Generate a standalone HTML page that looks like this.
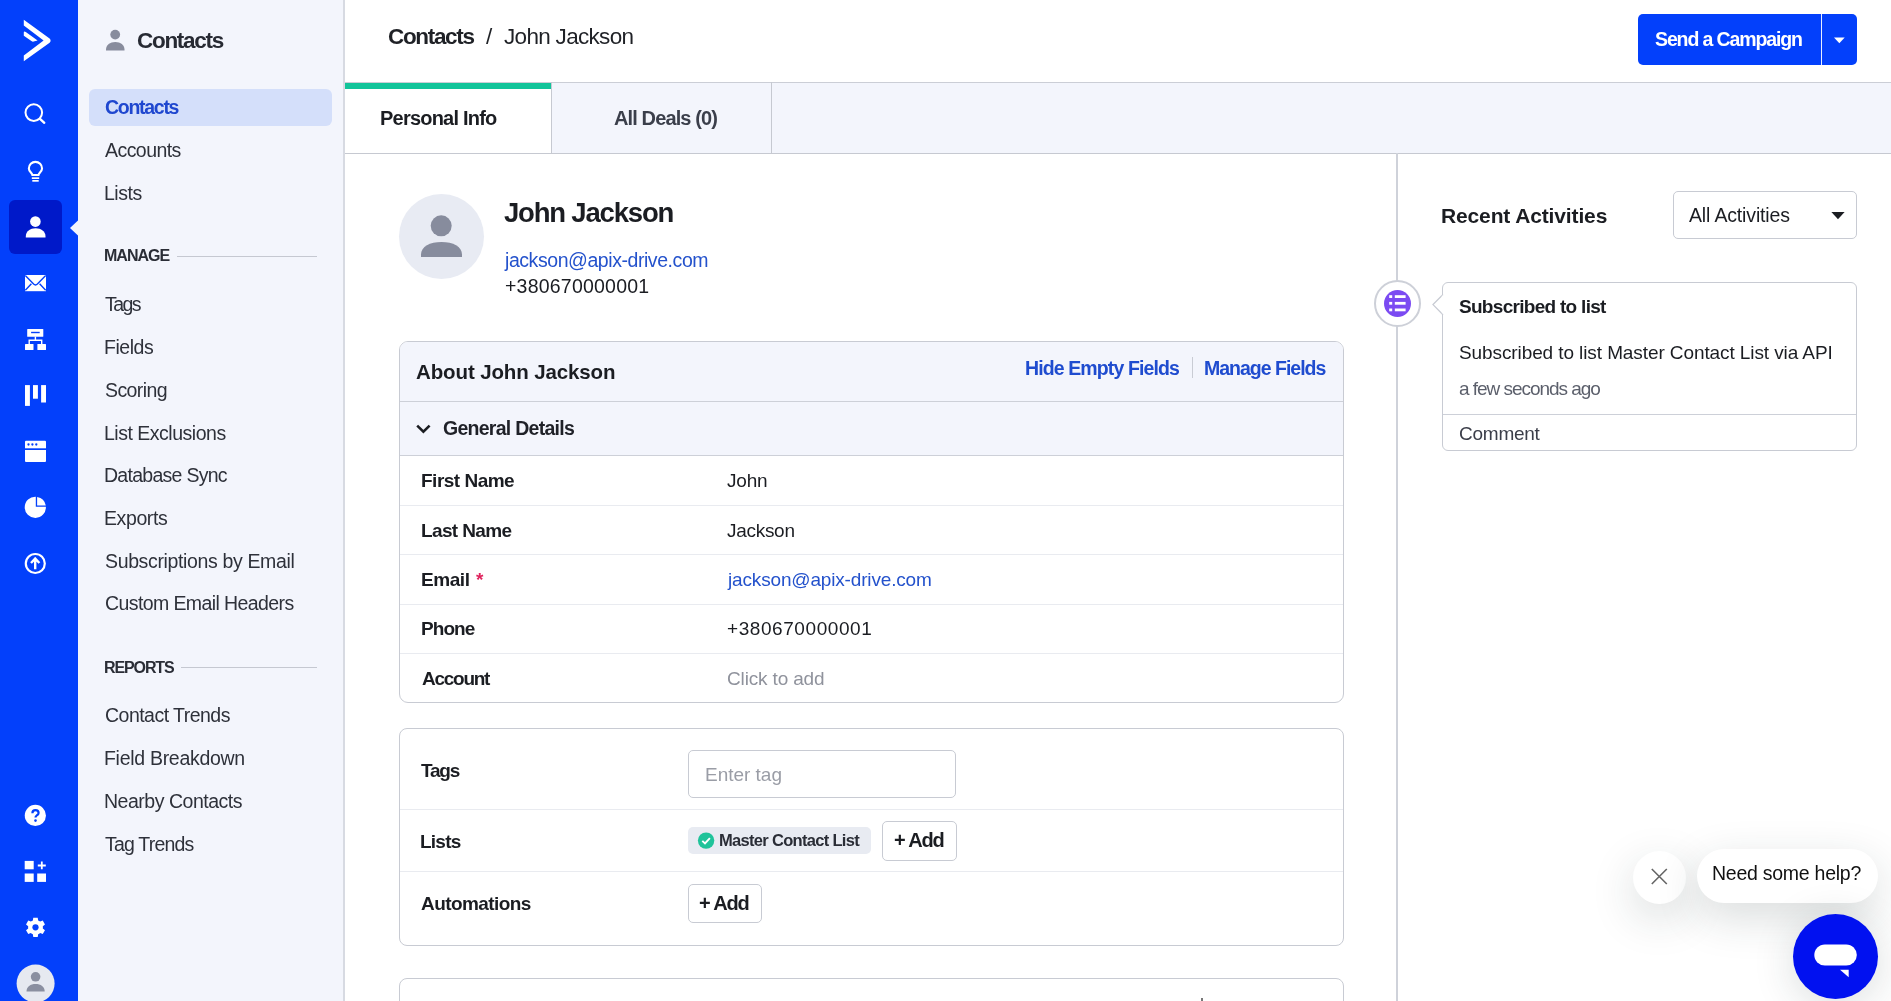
<!DOCTYPE html>
<html><head><meta charset="utf-8">
<style>
*{box-sizing:border-box;margin:0;padding:0}
html,body{width:1891px;height:1001px;overflow:hidden;background:#fff;font-family:"Liberation Sans",sans-serif;color:#1f2129;position:relative}
.a{position:absolute}
.t{position:absolute;white-space:nowrap;line-height:1;will-change:transform}
svg{position:absolute;overflow:visible}

</style></head><body>
<!-- rail -->
<div class="a" style="left:0;top:0;width:78px;height:1001px;background:#0340fb"></div>
<div class="a" style="left:9px;top:200px;width:53px;height:54px;background:#0019c9;border-radius:6px"></div>
<!-- nav -->
<div class="a" style="left:78px;top:0;width:266px;height:1001px;background:#f3f5fc"></div>
<div class="a" style="left:343px;top:0;width:2px;height:1001px;background:#d7dae2"></div>
<div class="a" style="left:89px;top:89px;width:243px;height:37px;background:#d4dffa;border-radius:6px"></div>
<div class="a" style="left:177px;top:256px;width:140px;height:1px;background:#c5c8d1"></div>
<div class="a" style="left:181px;top:667px;width:136px;height:1px;background:#c5c8d1"></div>
<!-- main header -->
<div class="a" style="left:1638px;top:14px;width:219px;height:50.5px;background:#0340fb;border-radius:5px"></div>
<div class="a" style="left:1820.5px;top:14px;width:1.5px;height:50.5px;background:#e8eeff"></div>
<!-- tabs -->
<div class="a" style="left:345px;top:82px;width:1546px;height:72px;background:#f3f5fc;border-top:1px solid #cbced6;border-bottom:1px solid #c6c9d1"></div>
<div class="a" style="left:345px;top:83px;width:206px;height:70px;background:#fff"></div>
<div class="a" style="left:345px;top:83px;width:207px;height:6px;background:#12c49a"></div>
<div class="a" style="left:551px;top:82px;width:1px;height:72px;background:#c6c9d1"></div>
<div class="a" style="left:771px;top:82px;width:1px;height:72px;background:#c6c9d1"></div>
<!-- right divider -->
<div class="a" style="left:1396px;top:153px;width:2px;height:848px;background:#cfd2da"></div>
<!-- avatar -->
<div class="a" style="left:398.5px;top:194px;width:85px;height:85px;border-radius:50%;background:#e8ebf3"></div>
<!-- about card -->
<div class="a" style="left:399px;top:341px;width:945px;height:362px;border:1px solid #c8cbd3;border-radius:9px;background:#fff;overflow:hidden">
  <div class="a" style="left:0;top:0;width:943px;height:114px;background:#f3f5fc"></div>
  <div class="a" style="left:0;top:59px;width:943px;height:1px;background:#cdd0d8"></div>
  <div class="a" style="left:0;top:113px;width:943px;height:1px;background:#cdd0d8"></div>
  <div class="a" style="left:0;top:163px;width:943px;height:1px;background:#e9ebf0"></div>
  <div class="a" style="left:0;top:212px;width:943px;height:1px;background:#e9ebf0"></div>
  <div class="a" style="left:0;top:262px;width:943px;height:1px;background:#e9ebf0"></div>
  <div class="a" style="left:0;top:311px;width:943px;height:1px;background:#e9ebf0"></div>
</div>
<div class="a" style="left:1192px;top:357px;width:1px;height:21px;background:#c9ccd4"></div>
<!-- tags card -->
<div class="a" style="left:399px;top:728px;width:945px;height:218px;border:1px solid #c8cbd3;border-radius:8px;background:#fff">
  <div class="a" style="left:0;top:80px;width:943px;height:1px;background:#e9ebf0"></div>
  <div class="a" style="left:0;top:142px;width:943px;height:1px;background:#e9ebf0"></div>
</div>
<div class="a" style="left:688px;top:750px;width:268px;height:48px;border:1px solid #c8cbd3;border-radius:5px;background:#fff"></div>
<div class="a" style="left:688px;top:827px;width:183px;height:27px;border-radius:5px;background:#e8ebf2"></div>
<div class="a" style="left:882px;top:821px;width:75px;height:40px;border:1px solid #c8cbd3;border-radius:5px;background:#fff"></div>
<div class="a" style="left:688px;top:884px;width:74px;height:39px;border:1px solid #c8cbd3;border-radius:5px;background:#fff"></div>
<!-- next card -->
<div class="a" style="left:399px;top:978px;width:945px;height:60px;border:1px solid #c8cbd3;border-radius:8px;background:#fff"></div>
<!-- activities -->
<div class="a" style="left:1673px;top:191px;width:184px;height:48px;border:1px solid #c8cbd3;border-radius:5px;background:#fff"></div>
<div class="a" style="left:1442px;top:282px;width:415px;height:169px;border:1px solid #c8cbd3;border-radius:6px;background:#fff">
  <div class="a" style="left:0;top:131px;width:413px;height:1px;background:#cdd0d8"></div>
</div>
<div class="a" style="left:1373.5px;top:279.5px;width:47.5px;height:47.5px;border-radius:50%;background:#fff;border:2.5px solid #cdd0d8"></div>
<div class="a" style="left:1383.5px;top:289.5px;width:27px;height:27px;border-radius:50%;background:#7b4af2"></div>
<!-- chat -->
<div class="a" style="left:1633px;top:851px;width:53px;height:53px;border-radius:50%;background:#fff;box-shadow:0 14px 44px rgba(30,45,45,.17)"></div>
<div class="a" style="left:1697px;top:849px;width:181px;height:54px;border-radius:27px;background:#fff;box-shadow:0 14px 44px rgba(30,45,45,.17)"></div>
<div class="a" style="left:1792.5px;top:914px;width:85px;height:85px;border-radius:50%;background:#0111f0;box-shadow:0 6px 40px rgba(30,45,45,.17)"></div>
<!-- icons overlay -->
<svg width="1891" height="1001" style="left:0;top:0">
 <!-- logo -->
 <path d="M23.8,19.8 L49.6,38.4 Q51.6,40.6 49.6,42.8 L23.8,61.2 L23.8,55.4 L43.6,40.6 L23.8,25.6 Z" fill="#fff"/>
 <path d="M23.8,32.6 Q23.8,30.6 25.8,31.9 L37.6,40.6 L33.6,41.6 Q32.4,41.8 31.4,41.1 L23.8,35.8 Z" fill="#fff"/>
 <!-- search -->
 <circle cx="33.8" cy="112.6" r="8.3" fill="none" stroke="#fff" stroke-width="2"/>
 <line x1="40" y1="118.8" x2="44.3" y2="122.8" stroke="#fff" stroke-width="2.3" stroke-linecap="round"/>
 <!-- bulb -->
 <path d="M32.4,175 C32.2,173 28.85,171.5 28.85,168.45 A6.6,6.6 0 0 1 42.05,168.45 C42.05,171.5 38.7,173 38.5,175 Z" fill="none" stroke="#fff" stroke-width="2.1"/>
 <rect x="31.8" y="177.3" width="7.4" height="1.7" fill="#fff"/>
 <rect x="32.3" y="180" width="6.4" height="1.7" fill="#fff"/>
 <!-- contacts active -->
 <circle cx="35.4" cy="221.6" r="5.3" fill="#fff"/>
 <path d="M25.8,237.6 L25.8,236.4 C25.8,231.2 30.2,228.2 35.6,228.2 C41,228.2 45.5,231.2 45.5,236.4 L45.5,237.6 Z" fill="#fff"/>
 <polygon points="78,220.4 70,228 78,235.6" fill="#f3f5fc"/>
 <!-- mail -->
 <rect x="25" y="275" width="21" height="16.2" fill="#fff"/>
 <path d="M25.3,275.6 L33.6,284 Q35.5,285.8 37.4,284 L45.7,275.6" fill="none" stroke="#0340fb" stroke-width="1.4"/>
 <path d="M25.3,290.2 L31.4,283.7 M45.7,290.2 L39.6,283.7" fill="none" stroke="#0340fb" stroke-width="1.4"/>
 <!-- org chart -->
 <rect x="27.2" y="329" width="16.1" height="7.8" rx="0.6" fill="#fff"/>
 <rect x="31.1" y="331.8" width="8.6" height="1.4" fill="#0340fb"/>
 <path d="M35.4,336.6 V340.3 M29.2,344.5 V340.3 H41.7 V344.5" fill="none" stroke="#fff" stroke-width="1.4"/>
 <rect x="25" y="344" width="8.5" height="6" rx="0.5" fill="#fff"/>
 <rect x="37.4" y="344" width="8.6" height="6" rx="0.5" fill="#fff"/>
 <!-- pipeline -->
 <rect x="25" y="385.1" width="4.9" height="20.8" fill="#fff"/>
 <rect x="33" y="385.1" width="4.9" height="13.6" fill="#fff"/>
 <rect x="41.1" y="385.1" width="4.9" height="17.4" fill="#fff"/>
 <!-- browser -->
 <rect x="25" y="440.8" width="21" height="21.1" rx="1" fill="#fff"/>
 <rect x="25" y="448.3" width="21" height="1.7" fill="#0340fb"/>
 <circle cx="28.5" cy="444.5" r="1.15" fill="#0340fb"/>
 <circle cx="32.4" cy="444.5" r="1.15" fill="#0340fb"/>
 <circle cx="36.3" cy="444.5" r="1.15" fill="#0340fb"/>
 <!-- pie -->
 <path d="M35.8,496.7 L35.8,506.8 L45.9,506.8 A10.6,10.6 0 1 1 35.8,496.7 Z" fill="#fff"/>
 <path d="M37.1,496.9 L37.1,505.5 L45.8,505.5 A10.6,10.6 0 0 0 37.1,496.9 Z" fill="#fff"/>
 <!-- upload -->
 <circle cx="35.3" cy="563.5" r="9.5" fill="none" stroke="#fff" stroke-width="2.2"/>
 <path d="M35.2,569.3 V559 M31,563 L35.2,558.6 L39.4,563" fill="none" stroke="#fff" stroke-width="2.4"/>
 <!-- help -->
 <circle cx="35.35" cy="815.4" r="10.6" fill="#fff"/>
 <path d="M32.4,813.2 Q32.4,810.2 35.5,810.2 Q38.6,810.2 38.6,813 Q38.6,814.6 36.6,815.6 Q35.5,816.2 35.5,817.6" fill="none" stroke="#0340fb" stroke-width="2.2"/>
 <circle cx="35.5" cy="820.6" r="1.3" fill="#0340fb"/>
 <!-- apps -->
 <rect x="24.7" y="860.9" width="9" height="8.4" fill="#fff"/>
 <rect x="24.7" y="873.5" width="9" height="8.4" fill="#fff"/>
 <rect x="37.2" y="873.5" width="8.8" height="8.4" fill="#fff"/>
 <path d="M41.8,861.6 V869.3 M37.8,865.5 H45.8" stroke="#fff" stroke-width="1.8"/>
 <!-- gear -->
 <path d="M31.80,920.89 L32.85,920.39 L33.27,917.65 L37.73,917.65 L38.15,920.39 L39.20,920.89 L40.16,921.55 L42.74,920.55 L44.97,924.41 L42.81,926.14 L42.90,927.30 L42.81,928.46 L44.97,930.19 L42.74,934.05 L40.16,933.05 L39.20,933.71 L38.15,934.21 L37.73,936.95 L33.27,936.95 L32.85,934.21 L31.80,933.71 L30.84,933.05 L28.26,934.05 L26.03,930.19 L28.19,928.46 L28.10,927.30 L28.19,926.14 L26.03,924.41 L28.26,920.55 L30.84,921.55 Z" fill="#fff"/>
 <circle cx="35.5" cy="927.3" r="3.1" fill="#0340fb"/>
 <!-- avatar bottom -->
 <circle cx="35.6" cy="983.5" r="19" fill="#e6e9f0"/>
 <circle cx="35.6" cy="976.8" r="4.8" fill="#8a8fa0"/>
 <path d="M26.5,991.5 C26.5,986.5 30.5,984 35.6,984 C40.7,984 44.7,986.5 44.7,991.5 Z" fill="#8a8fa0"/>
 <!-- nav header person -->
 <circle cx="115.2" cy="34.6" r="4.9" fill="#888c9d"/>
 <path d="M106,50.5 L106,49.6 C106,44.8 110,41.9 115.3,41.9 C120.6,41.9 124.5,44.8 124.5,49.6 L124.5,50.5 Z" fill="#888c9d"/>
 <!-- send caret -->
 <polygon points="1834,37.6 1844.7,37.6 1839.35,43.3" fill="#fff"/>
 <!-- contact avatar person -->
 <circle cx="441.2" cy="225.8" r="10.5" fill="#878c9d"/>
 <path d="M421,257 L421,254.5 C421,246.5 430,242 441.5,242 C453,242 462,246.5 462,254.5 L462,257 Z" fill="#878c9d"/>
 <!-- chevron -->
 <polyline points="417.2,425.6 423.4,431.6 429.6,425.6" fill="none" stroke="#1b1d22" stroke-width="2.6"/>
 <!-- check -->
 <circle cx="706.1" cy="840.6" r="8.2" fill="#1fc39a"/>
 <polyline points="702.3,840.9 705,843.5 709.9,838.2" fill="none" stroke="#fff" stroke-width="1.9"/>
 <!-- dropdown caret -->
 <polygon points="1831.4,212 1844.6,212 1838,219.3" fill="#1b1d22"/>
 <!-- list icon -->
 <rect x="1389.2" y="295.2" width="3" height="2.8" fill="#fff"/>
 <rect x="1389.2" y="301.9" width="3" height="2.8" fill="#fff"/>
 <rect x="1389.2" y="308.5" width="3" height="2.8" fill="#fff"/>
 <rect x="1394.8" y="295.2" width="10.8" height="2.8" fill="#fff"/>
 <rect x="1394.8" y="301.9" width="10.8" height="2.8" fill="#fff"/>
 <rect x="1394.8" y="308.5" width="10.8" height="2.8" fill="#fff"/>
 <!-- activity pointer -->
 <path d="M1443,294.5 L1433,304.6 L1443,314.7" fill="#fff" stroke="#c8cbd3" stroke-width="1.3"/>
 <rect x="1441.8" y="295.6" width="3" height="17.8" fill="#fff"/>
 <!-- close x -->
 <path d="M1651.8,869 L1666.8,884 M1666.8,869 L1651.8,884" stroke="#666" stroke-width="1.6"/>
 <!-- chat bubble -->
 <rect x="1814.3" y="944.4" width="42.5" height="21.2" rx="10.6" fill="#fff"/>
 <polygon points="1840,969.7 1848.7,969.7 1848.7,977.3" fill="#fff"/>
</svg>
<div class="a" style="left:1201px;top:998px;width:1.5px;height:3px;background:#777"></div>

<div class="t" style="left:137.40px;top:29.75px;font-size:22.5px;font-weight:bold;color:#272a33;letter-spacing:-1.293px;">Contacts</div>
<div class="t" style="left:105.00px;top:98.49px;font-size:19.5px;font-weight:bold;color:#1f47cf;letter-spacing:-1.283px;">Contacts</div>
<div class="t" style="left:105.00px;top:141.49px;font-size:19.5px;color:#2e313a;letter-spacing:-0.551px;">Accounts</div>
<div class="t" style="left:104.00px;top:184.09px;font-size:19.5px;color:#2e313a;letter-spacing:-0.486px;">Lists</div>
<div class="t" style="left:104.20px;top:248.35px;font-size:16px;font-weight:bold;color:#2a2d36;letter-spacing:-0.967px;">MANAGE</div>
<div class="t" style="left:105.20px;top:295.49px;font-size:19.5px;color:#2e313a;letter-spacing:-1.547px;">Tags</div>
<div class="t" style="left:104.20px;top:338.19px;font-size:19.5px;color:#2e313a;letter-spacing:-0.453px;">Fields</div>
<div class="t" style="left:105.20px;top:380.89px;font-size:19.5px;color:#2e313a;letter-spacing:-0.579px;">Scoring</div>
<div class="t" style="left:104.20px;top:423.59px;font-size:19.5px;color:#2e313a;letter-spacing:-0.487px;">List Exclusions</div>
<div class="t" style="left:104.20px;top:466.29px;font-size:19.5px;color:#2e313a;letter-spacing:-0.724px;">Database Sync</div>
<div class="t" style="left:104.20px;top:508.99px;font-size:19.5px;color:#2e313a;letter-spacing:-0.393px;">Exports</div>
<div class="t" style="left:105.20px;top:551.69px;font-size:19.5px;color:#2e313a;letter-spacing:-0.358px;">Subscriptions by Email</div>
<div class="t" style="left:105.20px;top:594.39px;font-size:19.5px;color:#2e313a;letter-spacing:-0.597px;">Custom Email Headers</div>
<div class="t" style="left:104.00px;top:659.75px;font-size:16px;font-weight:bold;color:#2a2d36;letter-spacing:-1.112px;">REPORTS</div>
<div class="t" style="left:105.00px;top:706.49px;font-size:19.5px;color:#2e313a;letter-spacing:-0.526px;">Contact Trends</div>
<div class="t" style="left:104.00px;top:749.19px;font-size:19.5px;color:#2e313a;letter-spacing:-0.293px;">Field Breakdown</div>
<div class="t" style="left:104.00px;top:791.89px;font-size:19.5px;color:#2e313a;letter-spacing:-0.477px;">Nearby Contacts</div>
<div class="t" style="left:105.00px;top:834.59px;font-size:19.5px;color:#2e313a;letter-spacing:-0.797px;">Tag Trends</div>
<div class="t" style="left:388.00px;top:25.55px;font-size:22.5px;font-weight:bold;color:#1f2126;letter-spacing:-1.336px;">Contacts</div>
<div class="t" style="left:485.50px;top:25.55px;font-size:22.5px;color:#1f2126;letter-spacing:0.000px;">/</div>
<div class="t" style="left:504.00px;top:25.55px;font-size:22.5px;color:#1f2126;letter-spacing:-0.688px;">John Jackson</div>
<div class="t" style="left:1655.40px;top:29.69px;font-size:19.5px;font-weight:bold;color:#ffffff;letter-spacing:-1.122px;">Send a Campaign</div>
<div class="t" style="left:380.00px;top:108.07px;font-size:20px;font-weight:bold;color:#1b1d22;letter-spacing:-0.789px;">Personal Info</div>
<div class="t" style="left:613.70px;top:108.27px;font-size:20px;font-weight:bold;color:#3b3f4b;letter-spacing:-0.877px;">All Deals (0)</div>
<div class="t" style="left:504.20px;top:199.02px;font-size:27.5px;font-weight:bold;color:#1b1d22;letter-spacing:-1.191px;">John Jackson</div>
<div class="t" style="left:505.00px;top:250.69px;font-size:19.5px;color:#2452cc;letter-spacing:-0.436px;">jackson@apix-drive.com</div>
<div class="t" style="left:504.70px;top:277.09px;font-size:19.5px;color:#1b1d22;letter-spacing:0.218px;">+380670000001</div>
<div class="t" style="left:416.00px;top:361.54px;font-size:20.5px;font-weight:bold;color:#1b1d22;letter-spacing:-0.123px;">About John Jackson</div>
<div class="t" style="left:1024.50px;top:358.69px;font-size:19.5px;font-weight:bold;color:#1f4ccf;letter-spacing:-0.887px;">Hide Empty Fields</div>
<div class="t" style="left:1203.50px;top:358.69px;font-size:19.5px;font-weight:bold;color:#1f4ccf;letter-spacing:-1.002px;">Manage Fields</div>
<div class="t" style="left:443.00px;top:418.79px;font-size:19.5px;font-weight:bold;color:#1f2128;letter-spacing:-0.724px;">General Details</div>
<div class="t" style="left:420.50px;top:471.41px;font-size:19px;font-weight:bold;color:#1b1d22;letter-spacing:-0.504px;">First Name</div>
<div class="t" style="left:727.30px;top:471.41px;font-size:19px;color:#1b1d22;letter-spacing:-0.178px;">John</div>
<div class="t" style="left:420.50px;top:520.71px;font-size:19px;font-weight:bold;color:#1b1d22;letter-spacing:-0.641px;">Last Name</div>
<div class="t" style="left:727.30px;top:520.71px;font-size:19px;color:#1b1d22;letter-spacing:-0.289px;">Jackson</div>
<div class="t" style="left:420.50px;top:570.01px;font-size:19px;font-weight:bold;color:#1b1d22;letter-spacing:-0.428px;">Email</div>
<div class="t" style="left:728.30px;top:570.01px;font-size:19px;color:#2452cc;letter-spacing:-0.163px;">jackson@apix-drive.com</div>
<div class="t" style="left:420.50px;top:619.31px;font-size:19px;font-weight:bold;color:#1b1d22;letter-spacing:-0.948px;">Phone</div>
<div class="t" style="left:727.30px;top:619.31px;font-size:19px;color:#1b1d22;letter-spacing:0.572px;">+380670000001</div>
<div class="t" style="left:421.50px;top:668.61px;font-size:19px;font-weight:bold;color:#1b1d22;letter-spacing:-1.262px;">Account</div>
<div class="t" style="left:727.30px;top:668.61px;font-size:19px;color:#8f929c;letter-spacing:-0.155px;">Click to add</div>
<div class="t" style="left:475.70px;top:570.01px;font-size:19px;font-weight:bold;color:#e0245e;letter-spacing:0.000px;">*</div>
<div class="t" style="left:421.30px;top:760.91px;font-size:19px;font-weight:bold;color:#1b1d22;letter-spacing:-1.223px;">Tags</div>
<div class="t" style="left:420.30px;top:831.61px;font-size:19px;font-weight:bold;color:#1b1d22;letter-spacing:-0.770px;">Lists</div>
<div class="t" style="left:421.30px;top:893.91px;font-size:19px;font-weight:bold;color:#1b1d22;letter-spacing:-0.584px;">Automations</div>
<div class="t" style="left:704.60px;top:764.71px;font-size:19px;color:#9a9da6;letter-spacing:-0.017px;">Enter tag</div>
<div class="t" style="left:719.40px;top:831.73px;font-size:16.5px;font-weight:bold;color:#2a2d36;letter-spacing:-0.690px;">Master Contact List</div>
<div class="t" style="left:893.50px;top:830.37px;font-size:20px;font-weight:bold;color:#1b1d22;letter-spacing:-1.149px;">+ Add</div>
<div class="t" style="left:698.90px;top:892.97px;font-size:20px;font-weight:bold;color:#1b1d22;letter-spacing:-1.149px;">+ Add</div>
<div class="t" style="left:1441.00px;top:204.92px;font-size:21px;font-weight:bold;color:#1b1d22;letter-spacing:-0.134px;">Recent Activities</div>
<div class="t" style="left:1689.40px;top:206.49px;font-size:19.5px;color:#1b1d22;letter-spacing:-0.152px;">All Activities</div>
<div class="t" style="left:1458.80px;top:296.91px;font-size:19px;font-weight:bold;color:#1b1d22;letter-spacing:-0.705px;">Subscribed to list</div>
<div class="t" style="left:1458.90px;top:342.91px;font-size:19px;color:#1b1d22;letter-spacing:-0.096px;">Subscribed to list Master Contact List via API</div>
<div class="t" style="left:1458.90px;top:379.41px;font-size:19px;color:#5b5f6b;letter-spacing:-1.036px;">a few seconds ago</div>
<div class="t" style="left:1458.90px;top:423.71px;font-size:19px;color:#3b3e49;letter-spacing:-0.246px;">Comment</div>
<div class="t" style="left:1712.00px;top:864.09px;font-size:19.5px;color:#111111;letter-spacing:-0.257px;">Need some help?</div>
</body></html>
